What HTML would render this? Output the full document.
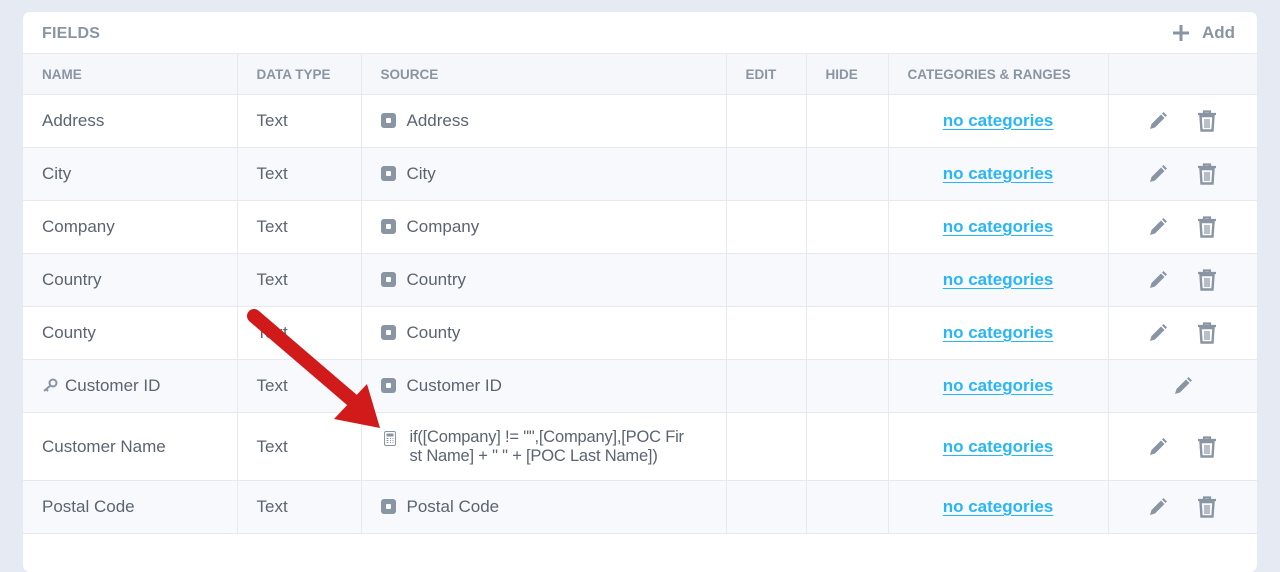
<!DOCTYPE html>
<html><head><style>
*{margin:0;padding:0;box-sizing:border-box}
body{width:1280px;height:524px;background:#e6eaf2;font-family:"Liberation Sans",sans-serif;overflow:hidden;position:relative}
.card{position:absolute;left:23px;top:12px;width:1234px;height:560px;background:#fff;border-radius:7px;overflow:hidden}
.title{position:absolute;left:19px;top:13px;font-size:16px;font-weight:bold;color:#8a95a3;letter-spacing:.2px}
.add{position:absolute;right:22px;top:10px;height:22px;line-height:22px;font-size:17px;font-weight:bold;color:#8a95a3;display:flex;align-items:center}
table{position:absolute;left:0;top:41px;border-collapse:collapse;width:1234px;table-layout:fixed}
td,th{border:1px solid #e6eaf0;font-size:17px;color:#5b6471;text-align:left;padding:0 0 0 19px;white-space:nowrap}
th{height:41px;background:#f5f7fa;font-size:13.5px;font-weight:bold;color:#8a95a3}
td{height:53px}
th:first-child,td:first-child{border-left:none}
tr.g td{background:#f8f9fc}
.c{text-align:center;padding:0}
a{color:#29b6f6;font-weight:bold;text-decoration:underline;text-underline-offset:3px}
.sq{display:inline-block;width:15px;height:15px;background:#8a95a3;border-radius:3px;vertical-align:-2px;margin-right:11px;position:relative}
.sq:after{content:"";position:absolute;left:5px;top:5px;width:5px;height:5px;background:#fff;border-radius:1px}
svg{vertical-align:middle}
</style></head><body>
<div class="card">
<div class="title">FIELDS</div>
<div class="add"><svg width="18" height="18" viewBox="0 0 18 18" style="margin-right:12px"><path d="M9 1v16M1 9h16" stroke="#8a95a3" stroke-width="3"/></svg>Add</div>
<table>
<colgroup><col style="width:214px"><col style="width:124px"><col style="width:365px"><col style="width:80px"><col style="width:82px"><col style="width:220px"><col style="width:149px"></colgroup>
<tr><th>NAME</th><th>DATA TYPE</th><th>SOURCE</th><th>EDIT</th><th>HIDE</th><th>CATEGORIES &amp; RANGES</th><th></th></tr>
<tr><td>Address</td><td>Text</td><td><span class="sq"></span>Address</td><td></td><td></td><td class="c"><a>no categories</a></td><td class="c">ICONS</td></tr>
<tr class="g"><td>City</td><td>Text</td><td><span class="sq"></span>City</td><td></td><td></td><td class="c"><a>no categories</a></td><td class="c">ICONS</td></tr>
<tr><td>Company</td><td>Text</td><td><span class="sq"></span>Company</td><td></td><td></td><td class="c"><a>no categories</a></td><td class="c">ICONS</td></tr>
<tr class="g"><td>Country</td><td>Text</td><td><span class="sq"></span>Country</td><td></td><td></td><td class="c"><a>no categories</a></td><td class="c">ICONS</td></tr>
<tr><td>County</td><td>Text</td><td><span class="sq"></span>County</td><td></td><td></td><td class="c"><a>no categories</a></td><td class="c">ICONS</td></tr>
<tr class="g"><td><svg width="16" height="14" viewBox="0 0 16 14" style="margin-right:7px;vertical-align:-1px"><circle cx="11" cy="5" r="3.5" fill="none" stroke="#8a95a3" stroke-width="2"/><path d="M8.5 7.5L2 13M4 11l2 2" stroke="#8a95a3" stroke-width="2" fill="none"/></svg>Customer ID</td><td>Text</td><td><span class="sq"></span>Customer ID</td><td></td><td></td><td class="c"><a>no categories</a></td><td class="c">PEN</td></tr>
<tr><td style="height:68px">Customer Name</td><td>Text</td><td style="line-height:19px;padding-right:4px"><div style="display:flex"><svg width="12" height="15" viewBox="0 0 12 15" style="margin:3px 14px 0 3px;flex:none"><rect x="0.5" y="0.5" width="11" height="14" rx="1.5" fill="none" stroke="#8a95a3"/><rect x="2.5" y="2.5" width="7" height="3" fill="#8a95a3"/><path d="M2.5 7.5h2m1.5 0h1m1.5 0h1M2.5 9.5h2m1.5 0h1m1.5 0h1M2.5 11.5h2m1.5 0h1m1.5 0h1" stroke="#8a95a3"/></svg><span style="font-size:16.5px;letter-spacing:-0.2px">if([Company] != "",[Company],[POC Fir<br>st Name] + " " + [POC Last Name])</span></div></td><td></td><td></td><td class="c"><a>no categories</a></td><td class="c">ICONS</td></tr>
<tr class="g"><td>Postal Code</td><td>Text</td><td><span class="sq"></span>Postal Code</td><td></td><td></td><td class="c"><a>no categories</a></td><td class="c">ICONS</td></tr>
</table>
</div>
<svg width="160" height="140" style="position:absolute;left:240px;top:302px" viewBox="0 0 160 140"><path d="M14 14L112 98" stroke="#d11a1a" stroke-width="14" stroke-linecap="round"/><path d="M94 117L127 82L140 126Z" fill="#d11a1a"/></svg>
<script>
var pen='<svg width="20" height="20" viewBox="0 0 20 20"><path d="M2 18l1.5-5L13 3.5l3.5 3.5L7 16.5z" fill="#8a95a3"/><path d="M14 2.5l1.5-1.5 3.5 3.5-1.5 1.5z" fill="#8a95a3"/></svg>';
var ic='<span style="margin-right:28px">'+pen+'</span><svg width="22" height="24" viewBox="0 0 22 24"><path d="M2 5h18M8 5V2.5h6V5" stroke="#8a95a3" stroke-width="2.2" fill="none"/><path d="M4.5 7h13l-1 14.5h-11z" fill="none" stroke="#8a95a3" stroke-width="2.4"/><path d="M9 10v9M11 10v9M13 10v9" stroke="#8a95a3" stroke-width="1.2"/></svg>';
document.querySelectorAll('td').forEach(function(t){if(t.textContent=='ICONS')t.innerHTML=ic;if(t.textContent=='PEN')t.innerHTML=pen;});
</script>
</body></html>
